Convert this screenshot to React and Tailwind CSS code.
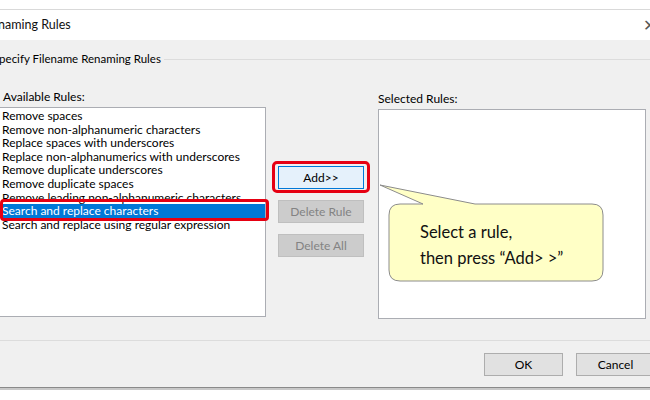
import React from "react";

const rules = [
  "Remove spaces",
  "Remove non-alphanumeric characters",
  "Replace spaces with underscores",
  "Replace non-alphanumerics with underscores",
  "Remove duplicate underscores",
  "Remove duplicate spaces",
  "Remove leading non-alphanumeric characters",
  "Search and replace characters",
  "Search and replace using regular expression",
];

export default function App() {
  return (
    <div className="relative w-[650px] h-[400px] overflow-hidden bg-white font-['Lato',sans-serif] text-[12px] text-[#000]">
      {/* top strip */}
      <div className="h-[9px] bg-white" />
      <div className="h-[1px] bg-[#d9d9d9]" />
      {/* title bar */}
      <div className="h-[30px] bg-white flex items-center justify-between">
        <span className="ml-[-16px] text-[12.5px] text-[#111]">Renaming Rules</span>
        <span className="mr-[-6px] text-[16px] text-[#555] font-light leading-none">✕</span>
      </div>
      {/* body */}
      <div className="bg-[#f0f0f0] h-[347px] flex flex-col">
        <div className="mt-[12px] h-[14px] flex items-center">
          <span className="ml-[-7px] whitespace-nowrap leading-none text-[11.5px]">Specify Filename Renaming Rules</span>
          <div className="flex-1 ml-[3px] h-[1px] bg-[#dcdcdc]" />
        </div>
        <div className="mt-[24px] ml-[-2px] flex">
          {/* left */}
          <div className="w-[268px] flex flex-col">
            <div className="h-[17px] pl-[5px] leading-[14px]">Available Rules:</div>
            <div className="relative h-[210px] bg-white border border-[#abadb3] pt-[1px]">
              {rules.map((r, i) => (
                <div
                  key={r}
                  className={
                    i === 7
                      ? "h-[13.6px] leading-[13.6px] pl-[3px] bg-[#0078d7] text-white whitespace-nowrap"
                      : "h-[13.6px] leading-[13.6px] pl-[3px] whitespace-nowrap overflow-hidden"
                  }
                >
                  {r}
                </div>
              ))}
            </div>
          </div>
          {/* buttons */}
          <div className="ml-[12px] w-[86px] pt-[76px] flex flex-col gap-[11px]">
            <div className="h-[23px] flex items-center justify-center bg-[#e5f1fb] border border-[#0078d7] text-[#000]">
              Add&gt;&gt;
            </div>
            <div className="h-[23px] flex items-center justify-center bg-[#cccccc] border border-[#bfbfbf] text-[#838383]">
              Delete Rule
            </div>
            <div className="h-[23px] flex items-center justify-center bg-[#cccccc] border border-[#bfbfbf] text-[#838383]">
              Delete All
            </div>
          </div>
          {/* right */}
          <div className="ml-[14px] w-[268px] flex flex-col pt-[2px]">
            <div className="h-[17px] leading-[14px]">Selected Rules:</div>
            <div className="h-[210px] bg-white border border-[#abadb3]" />
          </div>
        </div>
        <div className="mt-[21px] h-[1px] bg-[#dcdcdc]" />
        <div className="mt-[12px] flex justify-end gap-[13px] mr-[-5px]">
          <div className="w-[79px] h-[23px] flex items-center justify-center bg-[#e1e1e1] border border-[#adadad]">OK</div>
          <div className="w-[79px] h-[23px] flex items-center justify-center bg-[#e1e1e1] border border-[#adadad]">Cancel</div>
        </div>
      </div>
      <div className="h-[1px] bg-[#8a8a8a]" />
      <div className="h-[2px] bg-[#c8c8c8]" />

      {/* red highlights */}
      <div className="absolute left-[0px] top-[199px] w-[269px] h-[22px] border-[3px] border-[#e60012] rounded-[4px]" />
      <div className="absolute left-[272px] top-[161px] w-[98px] h-[32px] border-[3px] border-[#e60012] rounded-[5px]" />

      {/* callout */}
      <svg className="absolute left-[375px] top-[180px]" width="235" height="106" viewBox="0 0 235 106">
        <path
          d="M 25 24 L 48 24 L 5 5 L 100 24 L 217 24 Q 228 24 228 35 L 228 90 Q 228 101 217 101 L 25 101 Q 14 101 14 90 L 14 35 Q 14 24 25 24 Z"
          fill="#ffffc6"
          stroke="#8c8c8c"
          strokeWidth="1"
        />
      </svg>
      <div className="absolute left-[420px] top-[219px] font-['Lato',sans-serif] text-[16.5px] leading-[26px] text-[#111]">
        <div>Select a rule,</div>
        <div>then press “Add&gt; &gt;”</div>
      </div>
    </div>
  );
}
